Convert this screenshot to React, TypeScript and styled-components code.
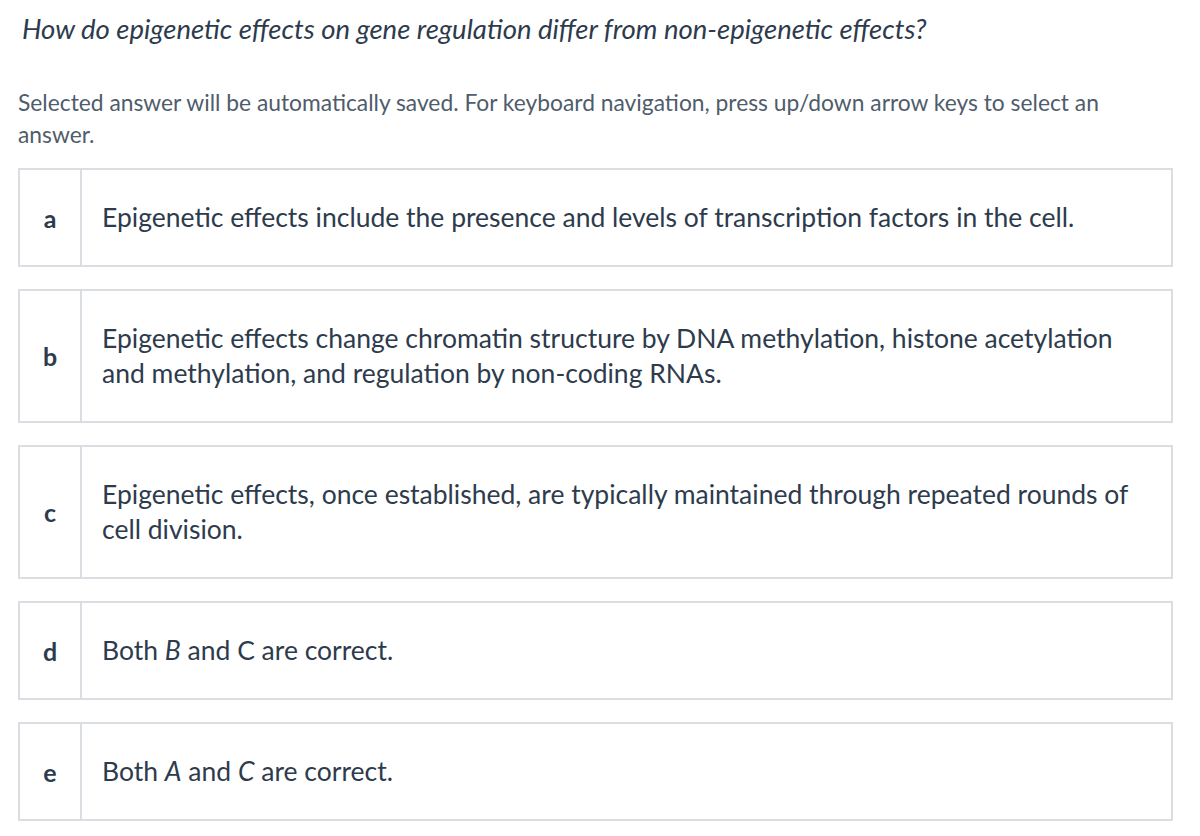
import React from 'react';
import styled, { createGlobalStyle } from 'styled-components';

const GlobalStyle = createGlobalStyle`
  html, body {
    margin: 0;
    padding: 0;
    background: #ffffff;
  }
  body {
    font-family: Lato, "Noto Sans", sans-serif;
    color: #2d3b4d;
  }
`;

const Page = styled.main`
  padding: 10px 27px 16px 18px;
`;

const Question = styled.h2`
  margin: 0 0 0 4px;
  font-size: 27.5px;
  line-height: 38px;
  font-weight: 400;
  font-style: italic;
  color: #2d3b4d;
`;

const Instructions = styled.p`
  margin: 38px 0 18px;
  font-size: 22.8px;
  line-height: 32px;
  color: #4f5c6b;
  max-width: 1110px;
`;

const OptionList = styled.ul`
  list-style: none;
  margin: 0;
  padding: 0;
  display: flex;
  flex-direction: column;
  gap: 22px;
`;

const Option = styled.li`
  display: flex;
  border: 2px solid #dadee3;
  background: #ffffff;
`;

const Letter = styled.span`
  flex: 0 0 60px;
  display: flex;
  align-items: center;
  justify-content: center;
  border-right: 2px solid #dadee3;
  font-size: 25px;
  font-weight: 700;
  color: #2d3b4d;
`;

const Text = styled.span`
  flex: 1;
  padding: 30px 25px 30px 20px;
  font-size: 26.5px;
  line-height: 35px;
  color: #2d3b4d;
`;

type Choice = { id: string; content: React.ReactNode };

const choices: Choice[] = [
  {
    id: 'a',
    content:
      'Epigenetic effects include the presence and levels of transcription factors in the cell.',
  },
  {
    id: 'b',
    content:
      'Epigenetic effects change chromatin structure by DNA methylation, histone acetylation and methylation, and regulation by non-coding RNAs.',
  },
  {
    id: 'c',
    content:
      'Epigenetic effects, once established, are typically maintained through repeated rounds of cell division.',
  },
  {
    id: 'd',
    content: (
      <>
        Both <i>B</i> and C are correct.
      </>
    ),
  },
  {
    id: 'e',
    content: (
      <>
        Both <i>A</i> and <i>C</i> are correct.
      </>
    ),
  },
];

const App: React.FC = () => {
  return (
    <>
      <GlobalStyle />
      <Page>
        <Question>How do epigenetic effects on gene regulation differ from non-epigenetic effects?</Question>
        <Instructions>
          Selected answer will be automatically saved. For keyboard navigation, press up/down arrow keys to select an
          answer.
        </Instructions>
        <OptionList role="radiogroup">
          {choices.map((choice) => (
            <Option key={choice.id} role="radio" aria-checked={false} tabIndex={0}>
              <Letter>{choice.id}</Letter>
              <Text>{choice.content}</Text>
            </Option>
          ))}
        </OptionList>
      </Page>
    </>
  );
};

export default App;
